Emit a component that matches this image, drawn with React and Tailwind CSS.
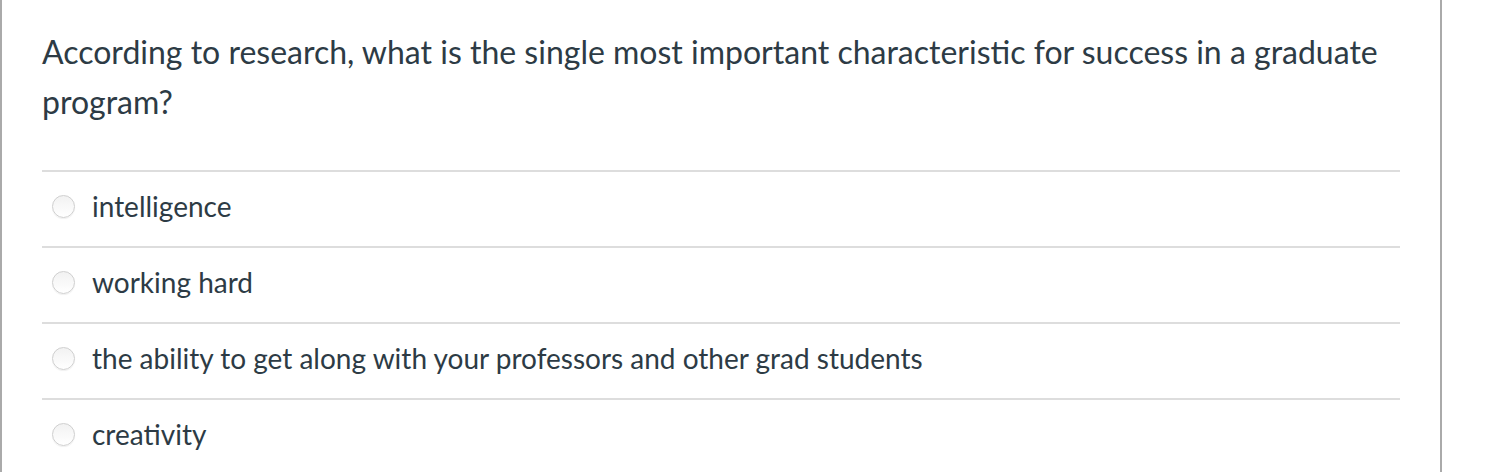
export default function App() {
  const options = [
    "intelligence",
    "working hard",
    "the ability to get along with your professors and other grad students",
    "creativity",
  ];
  return (
    <div className="w-[1486px] h-[472px] bg-white overflow-hidden" style={{ fontFamily: "Lato, 'Noto Sans', sans-serif" }}>
      <div className="w-[1442px] h-[472px] border-x-2 border-[#aaaaaa] px-[40px] text-[#2d3b45]">
        <div className="pt-[27px] text-[32px] leading-[50px] pb-[43px]">
          According to research, what is the single most important characteristic for success in a graduate program?
        </div>
        {options.map((o) => (
          <div key={o} className="h-[76px] border-t-2 border-[#dddddd] flex items-center pb-[6px]">
            <span className="ml-[10px] w-[23px] h-[23px] rounded-full border border-[#cfcfcf] bg-gradient-to-b from-[#f2f2f2] to-white shadow-[0_1px_1px_rgba(0,0,0,0.06)] shrink-0" />
            <span className="ml-[17px] text-[28px] leading-[40px]">{o}</span>
          </div>
        ))}
      </div>
    </div>
  );
}
